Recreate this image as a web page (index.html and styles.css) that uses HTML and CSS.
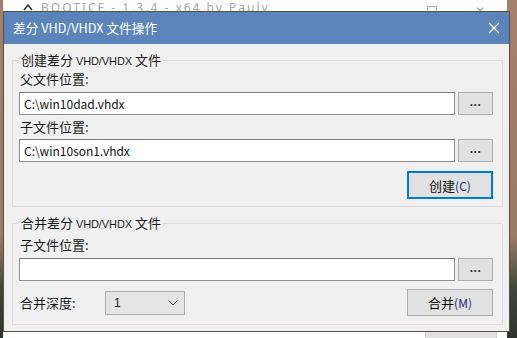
FILE: index.html
```html
<!DOCTYPE html>
<html lang="zh">
<head>
<meta charset="utf-8">
<link rel="stylesheet" href="styles.css">
</head>
<body>
<div class="desktop">
  <div class="bgwin">
    <div class="bgtitle">
      <svg class="bgicon" width="10" height="8" viewBox="0 0 10 8"><path d="M1 7 L5 2 L9 7" fill="none" stroke="#333" stroke-width="1.6"/></svg>
      <span class="bgtext">BOOTICE - 1.3.4 - x64 by Pauly</span>
      <span class="bgmax"></span>
      <span class="bgclose">✕</span>
    </div>
    <div class="bgbtn"></div>
  </div>

  <div class="dialog">
    <div class="titlebar">
      <span class="title">差分 VHD/VHDX 文件操作</span>
      <svg class="close" width="12" height="12" viewBox="0 0 12 12"><path d="M1 1 L11 11 M11 1 L1 11" stroke="#fff" stroke-width="1.3"/></svg>
    </div>
    <div class="body">
      <div class="group g1">
        <span class="legend">创建差分 <span class="lat">VHD/VHDX</span> 文件</span>
        <div class="label">父文件位置:</div>
        <div class="row">
          <div class="input">C:\win10dad.vhdx</div>
          <div class="btn small">...</div>
        </div>
        <div class="label l2">子文件位置:</div>
        <div class="row">
          <div class="input">C:\win10son1.vhdx</div>
          <div class="btn small">...</div>
        </div>
        <div class="actions">
          <div class="btn big focus">创建<span class="acc">(C)</span></div>
        </div>
      </div>

      <div class="group g2">
        <span class="legend">合并差分 <span class="lat">VHD/VHDX</span> 文件</span>
        <div class="label">子文件位置:</div>
        <div class="row">
          <div class="input"></div>
          <div class="btn small">...</div>
        </div>
        <div class="row bottomrow">
          <div class="dlabel">合并深度:</div>
          <div class="select">
            <span>1</span>
            <svg width="10" height="6" viewBox="0 0 10 6"><path d="M0.5 0.5 L5 5 L9.5 0.5" fill="none" stroke="#555" stroke-width="1"/></svg>
          </div>
          <div class="spacer"></div>
          <div class="btn big merge">合并<span class="acc">(M)</span></div>
        </div>
      </div>
    </div>
  </div>
</div>
</body>
</html>
```

FILE: styles.css
```css
* { box-sizing: border-box; }
html, body { margin: 0; padding: 0; }
body {
  width: 517px;
  height: 338px;
  overflow: hidden;
  font-family: "Noto Sans CJK SC", "Noto Sans", sans-serif;
  font-size: 13px;
  color: #1a1a1a;
}
.desktop {
  position: relative;
  width: 517px;
  height: 338px;
  background: linear-gradient(180deg, #a4806c 0%, #9a7a68 70%, #3f4a3c 85%, #2c3430 100%);
  overflow: hidden;
}
.bgwin {
  position: absolute;
  left: 3px;
  top: 0;
  width: 504px;
  height: 338px;
  background: #ffffff;
}
.bgtitle {
  position: relative;
  height: 11px;
  overflow: hidden;
}
.bgicon { position: absolute; left: 20px; top: 3px; }
.bgtext {
  position: absolute;
  left: 38px;
  top: 1px;
  font-family: "Noto Sans", sans-serif;
  font-size: 12px;
  line-height: 14px;
  color: #a8a8a8;
  letter-spacing: 2px;
}
.bgmax {
  position: absolute;
  left: 424px;
  top: 6px;
  width: 10px;
  height: 10px;
  border: 1px solid #b0b0b0;
}
.bgclose {
  position: absolute;
  left: 472px;
  top: 1px;
  font-size: 12px;
  color: #a0a0a0;
}
.bgbtn {
  position: absolute;
  left: 422px;
  top: 331px;
  width: 72px;
  height: 10px;
  background: #e1e1e1;
  border: 1px solid #cfcfcf;
}
.dialog {
  position: absolute;
  left: 3px;
  top: 11px;
  width: 507px;
  height: 321px;
  border: 1px solid #5c4c44;
  background: #f0f0f0;
  display: flex;
  flex-direction: column;
}
.titlebar {
  height: 32px;
  background: #5b84ba;
  display: flex;
  align-items: center;
  padding-left: 9px;
  position: relative;
}
.title {
  color: #ffffff;
  font-size: 12.7px;
  line-height: 16px;
}
.close { position: absolute; left: 484px; top: 10px; }
.body {
  padding: 16px 6px 0 8px;
  display: flex;
  flex-direction: column;
}
.group {
  position: relative;
  border: 1px solid #dcdcdc;
  padding: 10px 9px 0 6px;
}
.g1 { height: 147px; }
.g2 { height: 102px; margin-top: 16px; }
.legend {
  position: absolute;
  left: 6px;
  top: -9px;
  padding: 0 2px;
  background: #f0f0f0;
  line-height: 16px;
  font-size: 13px;
  color: #1a1a1a;
}
.lat {
  font-family: "Liberation Sans", sans-serif;
  font-size: 11px;
  letter-spacing: -0.1px;
}
.label {
  height: 16px;
  line-height: 16px;
  margin-left: 1px;
  margin-bottom: 5px;
}
.l2 { margin-top: 4px; margin-bottom: 4px; }
.row {
  display: flex;
  align-items: center;
  gap: 3px;
}
.input {
  width: 437px;
  height: 23px;
  background: #ffffff;
  border: 1px solid #8e8e8e;
  border-top-color: #7a7a7a;
  padding-left: 4px;
  line-height: 21px;
  font-size: 12px;
  color: #111;
}
.btn {
  background: #e1e1e1;
  border: 1px solid #adadad;
  display: flex;
  align-items: center;
  justify-content: center;
  color: #111;
}
.small {
  width: 35px;
  height: 23px;
  font-family: "Liberation Sans", sans-serif;
  font-size: 12px;
  font-weight: bold;
  letter-spacing: 0.5px;
  color: #2a2a4a;
  padding-bottom: 3px;
}
.big {
  width: 86px;
  height: 28px;
  font-size: 13px;
}
.focus {
  border: 2px solid #0078d7;
}
.acc { color: #1d2a6e; font-size: 12px; }
.actions {
  display: flex;
  justify-content: flex-end;
  margin-top: 9px;
}
.g2 .label { margin-bottom: 5px; margin-top: 3px; }
.bottomrow {
  margin-top: 8px;
  gap: 0;
}
.dlabel {
  width: 85px;
  margin-left: 1px;
  line-height: 16px;
}
.select {
  width: 80px;
  height: 24px;
  background: #e5e5e5;
  border: 1px solid #adadad;
  display: flex;
  align-items: center;
  justify-content: space-between;
  padding: 0 6px 0 8px;
  font-family: "Liberation Sans", sans-serif;
  font-size: 12px;
}
.spacer { flex: 1; }
.merge { height: 27px; }
```
